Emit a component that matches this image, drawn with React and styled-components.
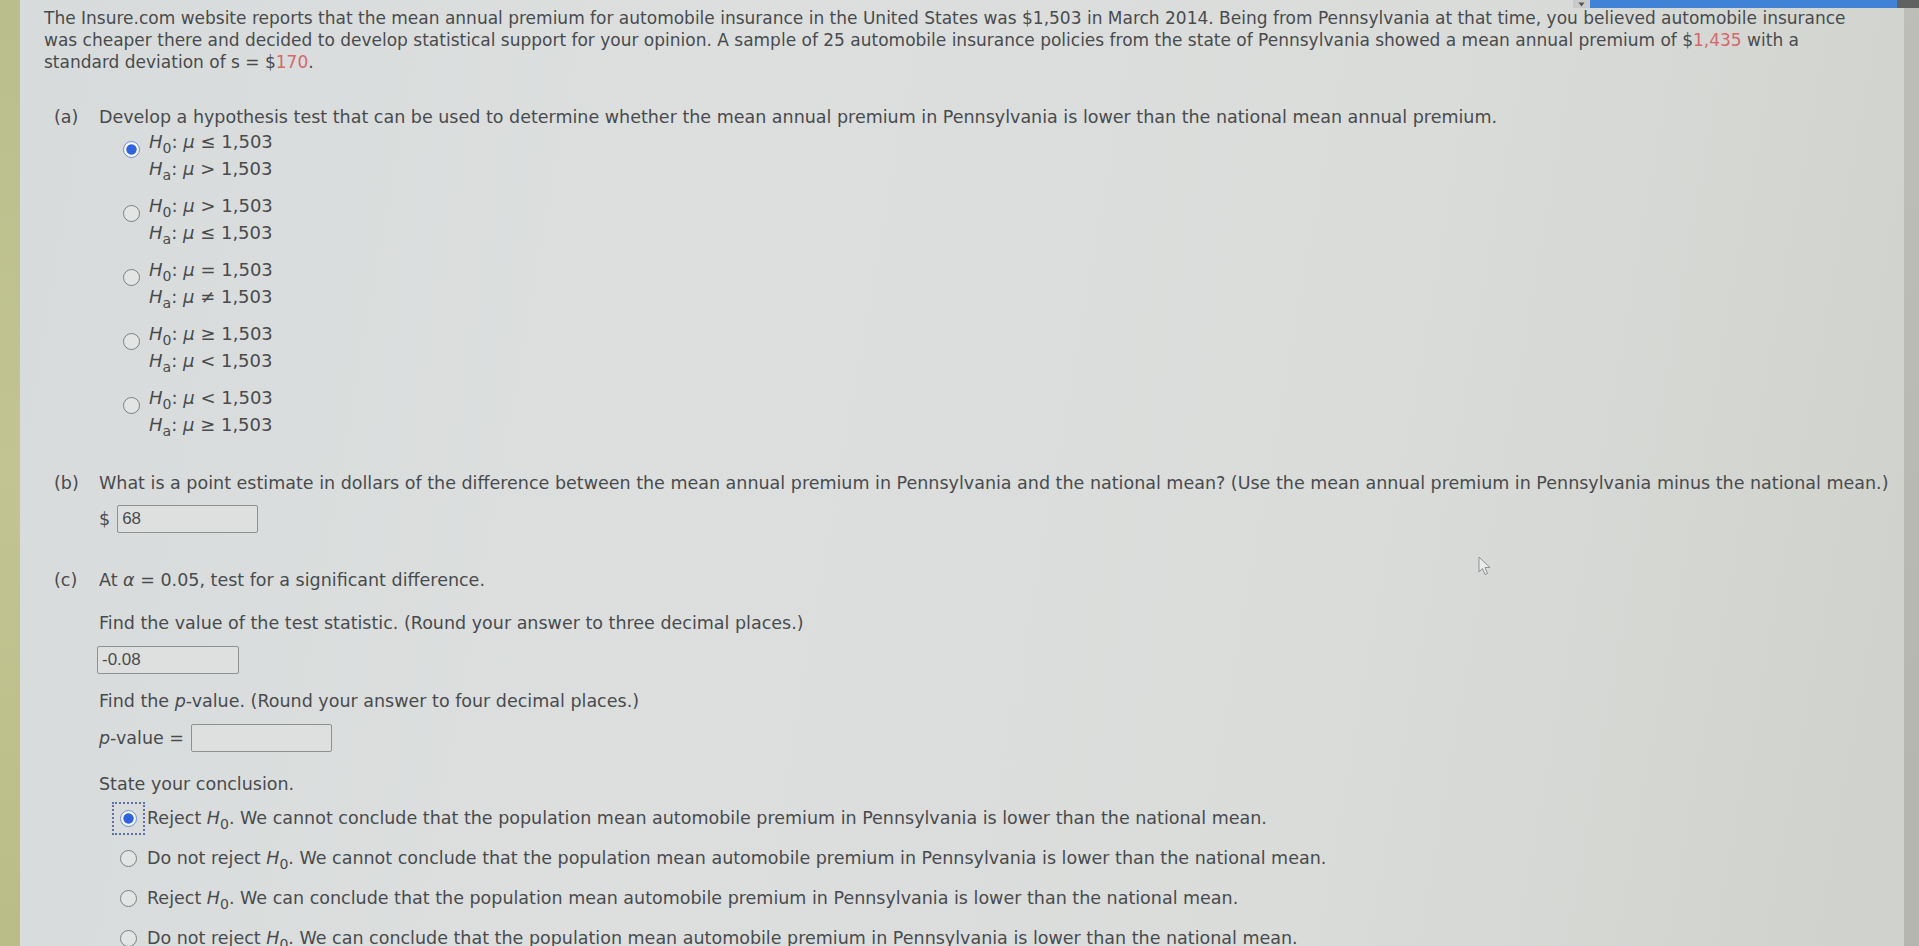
import React from "react";
import styled, { createGlobalStyle } from "styled-components";

const GlobalStyle = createGlobalStyle`
  html, body {
    margin: 0;
    padding: 0;
  }
  body {
    font-family: "DejaVu Sans", Verdana, sans-serif;
    color: #484b4d;
    overflow: hidden;
  }
`;

const hypotheses = [
  { h0: "\u2264", ha: ">", checked: true },
  { h0: ">", ha: "\u2264" },
  { h0: "=", ha: "\u2260" },
  { h0: "\u2265", ha: "<" },
  { h0: "<", ha: "\u2265" },
];

const conclusions = [
  { verb: "Reject", can: "cannot", checked: true },
  { verb: "Do not reject", can: "cannot" },
  { verb: "Reject", can: "can" },
  { verb: "Do not reject", can: "can" },
];

function H({ sub }) {
  return (
    <>
      <Ital>H</Ital>
      <Sub>{sub}</Sub>
    </>
  );
}

export default function App() {
  return (
    <Page>
      <GlobalStyle />
      <LeftStrip />
      <Main>
        <Intro>
          The Insure.com website reports that the mean annual premium for automobile insurance in the
          United States was $1,503 in March 2014. Being from Pennsylvania at that time, you believed
          automobile insurance
          <br />
          was cheaper there and decided to develop statistical support for your opinion. A sample of 25
          automobile insurance policies from the state of Pennsylvania showed a mean annual premium of $
          <Red>1,435</Red> with a
          <br />
          standard deviation of s = $<Red>170</Red>.
        </Intro>

        <Part $top={33}>
          <Label>(a)</Label>
          <div>
            <Line>
              Develop a hypothesis test that can be used to determine whether the mean annual premium in
              Pennsylvania is lower than the national mean annual premium.
            </Line>
            <Options>
              {hypotheses.map((o, i) => (
                <Option key={i}>
                  <Radio $checked={o.checked} $top={13} />
                  <div>
                    <HypLine>
                      <H sub="0" />: <Ital>μ</Ital> {o.h0} 1,503
                    </HypLine>
                    <HypLine>
                      <H sub="a" />: <Ital>μ</Ital> {o.ha} 1,503
                    </HypLine>
                  </div>
                </Option>
              ))}
            </Options>
          </div>
        </Part>

        <Part $top={34}>
          <Label>(b)</Label>
          <div>
            <Line>
              What is a point estimate in dollars of the difference between the mean annual premium in
              Pennsylvania and the national mean? (Use the mean annual premium in Pennsylvania minus the
              national mean.)
            </Line>
            <InputRow $top={11}>
              <span>$</span>
              <Field $w={141}>68</Field>
            </InputRow>
          </div>
        </Part>

        <Part $top={36}>
          <Label>(c)</Label>
          <div>
            <Line>
              At <Ital>α</Ital> = 0.05, test for a significant difference.
            </Line>
            <Line $top={21}>
              Find the value of the test statistic. (Round your answer to three decimal places.)
            </Line>
            <InputRow $top={12} $shift={-2}>
              <Field $w={142}>-0.08</Field>
            </InputRow>
            <Line $top={16}>
              Find the <Ital>p</Ital>-value. (Round your answer to four decimal places.)
            </Line>
            <InputRow $top={12}>
              <span>
                <Ital>p</Ital>-value =
              </span>
              <Field $w={141} />
            </InputRow>
            <Line $top={21}>State your conclusion.</Line>
            <Conclusions>
              {conclusions.map((c, i) => (
                <Conclusion key={i}>
                  <Focus $on={c.checked}>
                    <Radio $checked={c.checked} $top={0} />
                  </Focus>
                  <span>
                    {c.verb} <H sub="0" />. We {c.can} conclude that the population mean automobile
                    premium in Pennsylvania is lower than the national mean.
                  </span>
                </Conclusion>
              ))}
            </Conclusions>
          </div>
        </Part>

        <Cursor width="14" height="20" viewBox="0 0 14 20">
          <path
            d="M1 1 L1 16 L4.5 12.5 L7 18.5 L9.5 17.5 L7 11.5 L12 11.5 Z"
            fill="#e9eaea"
            stroke="#8d9092"
            strokeWidth="1"
          />
        </Cursor>
      </Main>
      <RightStrip />
      <Progress>
        <DropBox>
          <svg width="7" height="5" viewBox="0 0 7 5">
            <path d="M0.5 0.5 L6.5 0.5 L3.5 4.5 Z" fill="#555" />
          </svg>
        </DropBox>
        <BlueBar />
        <DarkEnd />
      </Progress>
    </Page>
  );
}

const Page = styled.div`
  position: relative;
  display: flex;
  width: 1919px;
  height: 946px;
  overflow: hidden;
  background: linear-gradient(100deg, #d8dbdb 0%, #dddfdf 35%, #dadcda 70%, #cfd1cc 100%);
`;

const LeftStrip = styled.div`
  width: 20px;
  flex-shrink: 0;
  background: linear-gradient(180deg, #b9be8c 0%, #c2c591 50%, #bbbd88 100%);
`;

const RightStrip = styled.div`
  width: 15px;
  flex-shrink: 0;
  background: linear-gradient(180deg, #bdbeb8 0%, #b5b5af 100%);
`;

const Main = styled.div`
  position: relative;
  flex: 1;
  padding: 7px 0 0 24px;
  font-size: 17.5px;
  line-height: 22px;
`;

const Intro = styled.p`
  margin: 0;
  font-size: 17px;
  white-space: nowrap;
`;

const Red = styled.span`
  color: #d4686a;
`;

const Ital = styled.i`
  font-style: italic;
`;

const Sub = styled.sub`
  font-size: 14px;
  vertical-align: -5px;
  line-height: 0;
`;

const Part = styled.div`
  display: grid;
  grid-template-columns: 45px 1fr;
  padding-left: 10px;
  margin-top: ${(p) => p.$top}px;
`;

const Label = styled.div`
  line-height: 22px;
`;

const Line = styled.div`
  margin-top: ${(p) => p.$top || 0}px;
`;

const Options = styled.div`
  display: flex;
  flex-direction: column;
  gap: 10px;
`;

const Option = styled.div`
  display: flex;
  align-items: flex-start;
  gap: 9px;
  padding-left: 24px;
`;

const HypLine = styled.div`
  font-size: 18px;
  line-height: 27px;
`;

const Radio = styled.span`
  display: inline-block;
  box-sizing: border-box;
  width: 17px;
  height: 17px;
  flex-shrink: 0;
  margin-top: ${(p) => p.$top}px;
  border-radius: 50%;
  border: 1.5px solid ${(p) => (p.$checked ? "#6f8ed8" : "#7c7f81")};
  background: ${(p) =>
    p.$checked
      ? "radial-gradient(circle, #2f62dc 0 45%, #f4f6fb 52% 100%)"
      : "#e3e5e5"};
`;

const Focus = styled.span`
  display: inline-flex;
  padding: 6px;
  margin: -8px;
  border: 2px dotted ${(p) => (p.$on ? "#5c6fae" : "transparent")};
`;

const InputRow = styled.div`
  display: flex;
  align-items: center;
  gap: 7px;
  margin-top: ${(p) => p.$top}px;
  margin-left: ${(p) => p.$shift || 0}px;
`;

const Field = styled.div`
  box-sizing: border-box;
  width: ${(p) => p.$w}px;
  height: 28px;
  padding: 0 4px;
  border: 1px solid #8e9192;
  border-radius: 2px;
  background: #dee0e0;
  font-family: "Liberation Sans", Arial, sans-serif;
  font-size: 17px;
  line-height: 26px;
  color: #4a4c4e;
`;

const Conclusions = styled.div`
  display: flex;
  flex-direction: column;
  gap: 18px;
  margin-top: 12px;
`;

const Conclusion = styled.div`
  display: flex;
  align-items: center;
  gap: 10px;
  padding-left: 21px;
`;

const Cursor = styled.svg`
  position: absolute;
  left: 1458px;
  top: 556px;
`;

const Progress = styled.div`
  position: absolute;
  top: 0;
  right: 0;
  display: flex;
  height: 8px;
`;

const DropBox = styled.div`
  display: flex;
  align-items: center;
  justify-content: center;
  width: 17px;
  background: #c9cbcb;
`;

const BlueBar = styled.div`
  width: 307px;
  background: #3f82d6;
`;

const DarkEnd = styled.div`
  width: 22px;
  background: #5f6261;
`;
